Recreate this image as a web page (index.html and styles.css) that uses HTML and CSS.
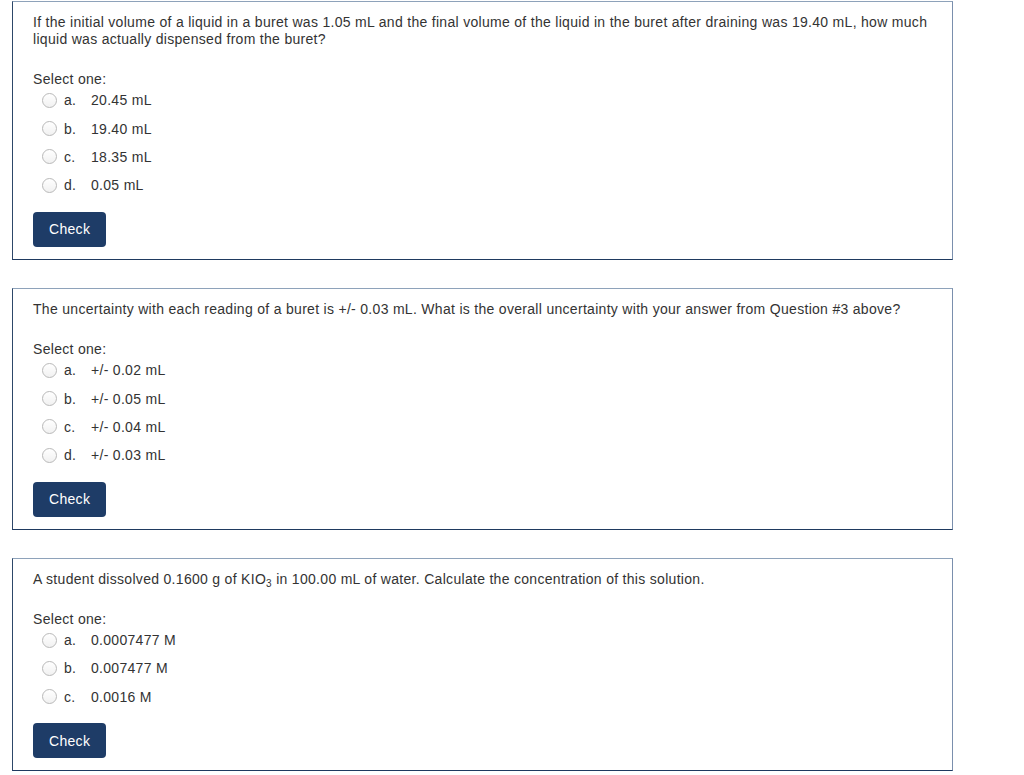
FILE: index.html
```html
<!DOCTYPE html>
<html lang="en">
<head>
    <meta charset="UTF-8">
    <meta name="viewport" content="width=device-width, initial-scale=1.0">
    <title>Quiz</title>
    <link rel="stylesheet" href="styles.css">
</head>
<body>
    <div class="quiz">
        <!-- question 3 -->
        <div class="que">
            <div class="qtext">If the initial volume of a liquid in a buret was 1.05 mL and the final volume of the liquid in the buret after draining was 19.40 mL, how much liquid was actually dispensed from the buret?</div>
            <div class="prompt">Select one:</div>
            <div class="answer">
                <label class="opt"><span class="radio"></span><span class="letter">a.</span><span>20.45 mL</span></label>
                <label class="opt"><span class="radio"></span><span class="letter">b.</span><span>19.40 mL</span></label>
                <label class="opt"><span class="radio"></span><span class="letter">c.</span><span>18.35 mL</span></label>
                <label class="opt"><span class="radio"></span><span class="letter">d.</span><span>0.05 mL</span></label>
            </div>
            <button class="check">Check</button>
        </div>
        <!-- question 4 -->
        <div class="que">
            <div class="qtext">The uncertainty with each reading of a buret is +/- 0.03 mL. What is the overall uncertainty with your answer from Question #3 above?</div>
            <div class="prompt">Select one:</div>
            <div class="answer">
                <label class="opt"><span class="radio"></span><span class="letter">a.</span><span>+/- 0.02 mL</span></label>
                <label class="opt"><span class="radio"></span><span class="letter">b.</span><span>+/- 0.05 mL</span></label>
                <label class="opt"><span class="radio"></span><span class="letter">c.</span><span>+/- 0.04 mL</span></label>
                <label class="opt"><span class="radio"></span><span class="letter">d.</span><span>+/- 0.03 mL</span></label>
            </div>
            <button class="check">Check</button>
        </div>
        <!-- question 5 -->
        <div class="que">
            <div class="qtext">A student dissolved 0.1600 g of KIO<sub>3</sub> in 100.00 mL of water. Calculate the concentration of this solution.</div>
            <div class="prompt">Select one:</div>
            <div class="answer">
                <label class="opt"><span class="radio"></span><span class="letter">a.</span><span>0.0007477 M</span></label>
                <label class="opt"><span class="radio"></span><span class="letter">b.</span><span>0.007477 M</span></label>
                <label class="opt"><span class="radio"></span><span class="letter">c.</span><span>0.0016 M</span></label>
            </div>
            <button class="check">Check</button>
        </div>
    </div>
</body>
</html>
```

FILE: styles.css
```css
body{
    margin: 0;
    padding: 1px 0 0 12px;
    background: #fff;
    font-family: "Liberation Sans", Arial, Helvetica, sans-serif;
    font-size: 14px;
    letter-spacing: 0.3px;
    color: #333;
}
.quiz{
    display: flex;
    flex-direction: column;
    gap: 28px;
    width: 941px;
}
.que{
    box-sizing: border-box;
    padding: 12px 20px 12.4px 20px;
    border: 1px solid;
    border-color: #8ea2ba #7a8fad #1f3a60 #2d4769;
}
.qtext{
    line-height: 17px;
    margin-bottom: 23px;
}
.qtext sub{
    font-size: 10px;
    line-height: 0;
    vertical-align: -3px;
}
.prompt{
    line-height: 17px;
    margin-bottom: -2px;
}
.answer{
    display: flex;
    flex-direction: column;
    padding-left: 9px;
}
.opt{
    display: flex;
    align-items: center;
    height: 28.4px;
}
.radio{
    box-sizing: border-box;
    width: 15px;
    height: 15px;
    margin-right: 7px;
    border: 1px solid #b9b9b9;
    border-radius: 50%;
    background: linear-gradient(#fff, #f1f1f1);
}
.letter{
    width: 27px;
}
.check{
    display: block;
    margin-top: 12px;
    height: 35px;
    padding: 0 16px;
    border: none;
    border-radius: 4px;
    background: #1e3c67;
    color: #fff;
    font-family: inherit;
    font-size: 14px;
    letter-spacing: 0.3px;
}
```
